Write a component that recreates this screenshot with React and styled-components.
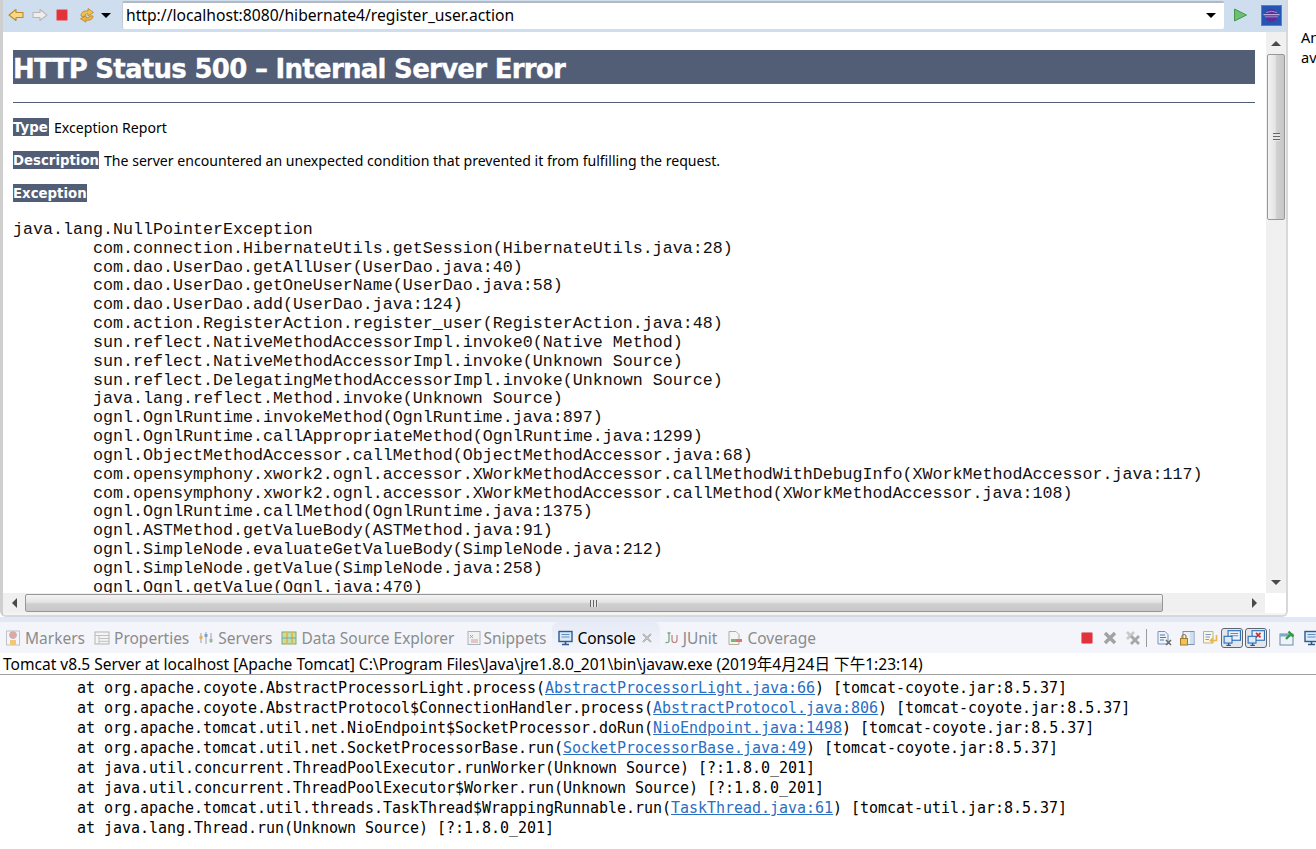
import React from "react";
import styled, { createGlobalStyle } from "styled-components";

const Global = createGlobalStyle`
  html, body { margin: 0; padding: 0; background: #fff; overflow: hidden; }
  #root { width: 1316px; height: 849px; }
`;

const UI = `"Noto Sans", "Noto Sans CJK SC", sans-serif`;

const Shell = styled.div`width:1316px;height:849px;overflow:hidden;display:flex;flex-direction:column;background:#fff;font-family:${UI};`;
const Top = styled.div`height:622px;flex:none;display:flex;background:linear-gradient(#fff 0,#fff 617px,#e3e8f7 617px);`;
const Editor = styled.section`width:1288px;height:617px;flex:none;box-sizing:border-box;border-left:3px solid #cfcfcf;border-right:2px solid #d8d8d8;border-bottom:2px solid #d8d8d8;border-radius:0 0 6px 6px;display:flex;flex-direction:column;overflow:hidden;`;
const Toolbar = styled.div`height:32px;flex:none;box-sizing:border-box;background:#cfdeee;display:flex;align-items:center;padding:0 4px 2px 5px;`;
const ToolIcon = styled.span`width:${p=>p.$w||16}px;height:${p=>p.$w||16}px;flex:none;margin-right:${p=>p.$mr||0}px;display:flex;`;
const Address = styled.div`flex:1;height:28px;box-sizing:border-box;background:#fff;border-top:2px solid #b4b8bf;border-left:1px solid #c8ccd2;border-radius:2px;display:flex;align-items:center;padding:0 8px 2px 3px;font-size:15.67px;color:#000;margin-right:9px;`;
const AddressText = styled.span`flex:1;`;
const Caret = styled.span`width:0;height:0;border-left:5px solid transparent;border-right:5px solid transparent;border-top:5px solid #000;margin-right:${p=>p.$mr||0}px;`;
const EditorMain = styled.div`flex:1;min-height:0;display:flex;`;
const Viewport = styled.div`flex:1;min-width:0;overflow:hidden;padding:18px 11px 0 10px;`;
const Heading = styled.h1`margin:0;height:34px;background:#525d76;color:#fff;font:bold 26px/38px "DejaVu Sans",sans-serif;white-space:nowrap;letter-spacing:-0.72px;-webkit-text-stroke:0.35px #fff;`;
const Rule = styled.hr`margin:18px 0 0;border:0;height:1px;background:#525d76;`;
const InfoLine = styled.p`margin:15px 0 0;height:18px;font:14.1px/19px "Noto Sans",sans-serif;color:#000;white-space:nowrap;`;
const Label = styled.b`display:inline-block;height:18px;background:#525d76;color:#fff;font:bold 13.3px/19px "DejaVu Sans",sans-serif;width:${p=>p.$w}px;margin-right:5px;overflow:hidden;vertical-align:top;`;
const Trace = styled.pre`margin:19px 0 0;font:16.66px/18.83px "Liberation Mono",monospace;color:#111;tab-size:8;`;
const VBar = styled.div`width:20px;flex:none;display:flex;flex-direction:column;background:#f0f0f0;`;
const VBtn = styled.div`height:${p=>p.$h}px;flex:none;display:flex;align-items:center;justify-content:center;`;
const VTrack = styled.div`flex:1;`;
const ArrowUp = styled.span`border-left:5px solid transparent;border-right:5px solid transparent;border-bottom:5px solid #4a4a4a;`;
const ArrowDown = styled.span`border-left:5px solid transparent;border-right:5px solid transparent;border-top:5px solid #4a4a4a;`;
const ArrowLeft = styled.span`border-top:5px solid transparent;border-bottom:5px solid transparent;border-right:5px solid #4a4a4a;`;
const ArrowRight = styled.span`border-top:5px solid transparent;border-bottom:5px solid transparent;border-left:5px solid #4a4a4a;`;
const VThumb = styled.div`height:166px;flex:none;box-sizing:border-box;margin-left:1px;width:18px;border:1px solid #979797;border-radius:2px;background:linear-gradient(90deg,#f3f3f3 0,#e4e4e4 45%,#cfcfcf 55%,#c8c8c8 100%);display:flex;align-items:center;justify-content:center;`;
const GripV = styled.span`width:7px;height:8px;background:repeating-linear-gradient(#666 0,#666 1px,#e6e6e6 1px,#e6e6e6 3px);`;
const GripH = styled.span`width:8px;height:7px;background:repeating-linear-gradient(90deg,#666 0,#666 1px,#e6e6e6 1px,#e6e6e6 3px);`;
const HBar = styled.div`height:20px;flex:none;display:flex;background:#f0f0f0;margin-right:21px;`;
const HBtn = styled.div`width:${p=>p.$w}px;flex:none;display:flex;align-items:center;justify-content:center;`;
const HThumb = styled.div`width:1138px;height:18px;flex:none;box-sizing:border-box;margin-top:1px;border:1px solid #979797;border-radius:2px;background:linear-gradient(#f3f3f3 0,#e4e4e4 45%,#cfcfcf 55%,#c8c8c8 100%);display:flex;align-items:center;justify-content:center;`;
const HTrack = styled.div`flex:1;`;
const BottomEdge = styled.div`height:2px;flex:none;background:#f4f4f4;`;
const Side = styled.aside`flex:1;min-width:0;overflow:hidden;margin-left:5px;padding:27px 0 0 8px;font:14.6px/20px "Noto Sans",sans-serif;color:#000;white-space:pre;`;
const TabBar = styled.div`height:31px;flex:none;background:#f3f5fb;display:flex;align-items:center;padding-left:5px;`;
const Tab = styled.div`display:flex;align-items:center;height:31px;font-size:15.5px;color:${p=>p.$active?"#000":"#8c8c8c"};margin-right:${p=>p.$mr||0}px;${p=>p.$active?"background:linear-gradient(#e6ebf6,#f3f5fb);border-radius:7px 7px 0 0;padding:0 8px 0 6px;":""}`;
const TabIcon = styled.span`width:16px;height:16px;display:flex;margin-right:${p=>p.$mr??4}px;flex:none;`;
const TabClose = styled.span`margin-left:6px;width:10px;height:10px;display:flex;`;
const Spacer = styled.div`flex:1;`;
const ActionIcon = styled.span`width:${p=>p.$pressed?22:16}px;height:${p=>p.$pressed?20:16}px;flex:none;display:flex;align-items:center;justify-content:center;margin-right:${p=>p.$mr??6}px;box-sizing:border-box;${p=>p.$pressed?"border:1.5px solid #5f6670;border-radius:3px;background:#e3e6ea;":""}`;
const Sep = styled.span`width:1px;height:18px;background:#9a9a9a;flex:none;margin:0 9px 0 2px;`;
const ConsoleHead = styled.div`height:21px;flex:none;border-bottom:1px solid #a0a0a0;font-size:15.55px;line-height:22px;padding-left:3px;color:#000;white-space:nowrap;`;
const ConsoleBody = styled.pre`margin:0;padding:3px 0 0 5px;font:15px/20px "DejaVu Sans Mono",monospace;letter-spacing:-0.03px;color:#000;tab-size:8;`;
const Link = styled.a`color:#2a6fc4;text-decoration:underline;`;

const S = ({ children, vb = "0 0 16 16" }) => <svg width="100%" height="100%" viewBox={vb} xmlns="http://www.w3.org/2000/svg">{children}</svg>;

const Arrow = ({ fill, stroke, flip }) => (
  <S><path d="M1 8 L8 2.5 V5.5 H15 V10.5 H8 V13.5 Z" fill={fill} stroke={stroke} strokeWidth="1.1" strokeLinejoin="round" transform={flip ? "matrix(-1 0 0 1 16 0)" : undefined} /></S>
);
const Stop = () => <S><rect x="0.5" y="2.5" width="11" height="11" rx="1.2" fill="#e2333c" stroke="#e58a90" strokeWidth="1" /></S>;
const Refresh = () => (
  <S>
    <path d="M2 9 C2 5 5 3.5 9 4 V1.5 L14.5 5.5 L9 9 V6.8 C7 6.5 5.5 7.5 5 10 Z" fill="#f2c04d" stroke="#b5852a" strokeWidth=".8" />
    <path d="M14 9 C14 12 11 14 7 13 V15.2 L1.5 11.8 L7 8.5 V10.5 C9 11 10.5 10.3 11 8.8 Z" fill="#efb33d" stroke="#b5852a" strokeWidth=".8" />
  </S>
);
const Go = () => <S><path d="M1.5 2 L13.5 8 L1.5 14 Z" fill="#6fbe73" stroke="#3f9a4c" strokeWidth="1" /></S>;
const EclipseLogo = () => (
  <S vb="0 0 21 21">
    <rect width="21" height="21" fill="#2556b4" />
    <rect x=".5" y=".5" width="20" height="20" fill="none" stroke="#3f8ed0" />
    <circle cx="10.5" cy="10.5" r="6.5" fill="#5b2f97" />
    <path d="M5 7.5 Q10.5 5 16 7.5" fill="none" stroke="#a88fd8" />
    <rect x="2.5" y="9.2" width="16" height="1" fill="#cfc8ec" />
    <rect x="4" y="11.4" width="13" height=".9" fill="#a89bd8" />
  </S>
);
const Markers = () => <S><circle cx="8" cy="5" r="3.5" fill="#e6a4a4" stroke="#bbb" /><rect x="1.5" y="1" width="13" height="14" fill="none" stroke="#c2c2c2" /><rect x="5" y="10" width="6" height="5" fill="#f0c877" /></S>;
const Properties = () => <S><rect x="1" y="2" width="14" height="12" fill="#f4f4f4" stroke="#b4b4b4" /><path d="M1 5.5 H15 M5 5.5 V14 M5 8.5 H15 M5 11.3 H15" stroke="#c0c0c0" /></S>;
const Servers = () => <S><path d="M3 3 V13 M8 2 V14 M13 3 V13" stroke="#9aa0aa" strokeWidth="1" /><rect x="1.5" y="6" width="3" height="3" fill="#e0b060" /><rect x="6.5" y="4" width="3" height="3" fill="#7aa0d0" /><rect x="11.5" y="9" width="3" height="3" fill="#8fbf8f" /></S>;
const DataSource = () => <S><rect x="1" y="2" width="14" height="12" fill="#bfe0a8" stroke="#82a870" /><path d="M6 2 V14 M11 2 V14" stroke="#e2b850" strokeWidth="2" /><path d="M1 8 H15" stroke="#6aa6c8" /></S>;
const Snippets = () => <S><rect x="2" y="1.5" width="12" height="13" fill="#f1f1f1" stroke="#a9b4bf" /><path d="M4 5 L7 8 M4 8 L7 5" stroke="#9aa6b3" /><path d="M5 10 H12 M5 12 H12" stroke="#d49a9a" /></S>;
const ConsoleIcon = () => <S><rect x="1" y="1.5" width="13" height="10" fill="#dce9f6" stroke="#2c5a92" strokeWidth="1.4" /><path d="M3.5 4.5 H11.5 M3.5 7 H11.5" stroke="#5b8ec8" /><path d="M4 14.5 H11 M7.5 11.5 V14.5" stroke="#2c5a92" strokeWidth="1.6" /></S>;
const CloseX = () => <S vb="0 0 10 10"><path d="M1 1 L9 9 M9 1 L1 9" stroke="#8a8a8a" strokeWidth="1.6" /><path d="M1 1 L9 9 M9 1 L1 9" stroke="#fff" strokeWidth=".5" /></S>;
const JUnit = () => <S><path d="M2.5 3 H5.5 M4 3 V10.5 Q4 13 .5 12.5" fill="none" stroke="#76a882" strokeWidth="1.3" /><path d="M7 5 V10 Q7 12.5 9.5 12.5 Q12 12.5 12 10 V5" fill="none" stroke="#c47f7f" strokeWidth="1.2" /></S>;
const Coverage = () => <S><path d="M2 1.5 H9 L12 4.5 V14.5 H2 Z" fill="#f4f4f4" stroke="#b3ac98" /><rect x="4" y="9" width="5" height="3" fill="#79b777" /><rect x="9" y="9" width="6" height="3" fill="#d87979" /></S>;
const GreyX = () => <S><path d="M3 3 L13 13 M13 3 L3 13" stroke="#a2a2a2" strokeWidth="3.4" /></S>;
const GreyXX = () => <S><path d="M2 2 L9 9 M9 2 L2 9" stroke="#c9c9c9" strokeWidth="2.6" /><path d="M6 6 L14 14 M14 6 L6 14" stroke="#a6a6a6" strokeWidth="2.8" /></S>;
const DocX = () => <S><path d="M2 1.5 H9 L12 4.5 V14 H2 Z" fill="#eef2fa" stroke="#7d93b5" /><path d="M4 5 H9 M4 7.5 H10 M4 10 H8" stroke="#4d79b8" /><path d="M10 10 L15 15 M15 10 L10 15" stroke="#6b6b6b" strokeWidth="1.6" /></S>;
const Lock = () => <S><rect x="4" y="1.5" width="11" height="13" fill="#eef2f8" stroke="#7e8fa6" /><rect x="11" y="2" width="3.5" height="12" fill="#cfe0f0" /><rect x="1.5" y="8.5" width="7" height="6.5" fill="#f0c35a" stroke="#a77b22" /><path d="M3 8.5 V6.5 A2 2 0 0 1 7 6.5 V8.5" fill="none" stroke="#8d7a55" strokeWidth="1.2" /></S>;
const DocArrow = () => <S><path d="M1.5 1.5 H11 V13 H1.5 Z" fill="#faf6e6" stroke="#c9b27a" /><path d="M3.5 4.5 H9 M3.5 7 H8 M3.5 9.5 H7" stroke="#7f9cc4" /><path d="M14.5 5 V10.5 H9 M11 8 L8.5 10.5 L11 13" fill="none" stroke="#e5b64f" strokeWidth="1.6" /></S>;
const PinWin = () => <S><rect x="1" y="4" width="13" height="11" fill="#eef3f8" stroke="#6d8aa8" /><rect x="1" y="4" width="13" height="2.5" fill="#7fa7c9" /><path d="M7 9 L11 5 M9.5 1.5 L14.5 6.5" stroke="#2f9a3d" strokeWidth="2.4" /></S>;

const Pressed = ({ red }) => (
  <S>
    <rect x="4.5" y="1.5" width="11" height="8.5" fill="#eef3fa" stroke="#2c70b8" />
    {red ? <path d="M8 3.5 L12 7.5 M12 3.5 L8 7.5" stroke="#d23030" strokeWidth="1.5" /> : <path d="M6.5 4 H13.5 M6.5 6 H13.5" stroke="#5b8ec8" />}
    <rect x="1" y="6.5" width="7" height="6" fill="#dfeaf6" stroke="#2c70b8" />
    <path d="M3 14.5 H7 M5 12.5 V14.5" stroke="#2c5a92" strokeWidth="1.2" />
  </S>
);

const trace = `java.lang.NullPointerException
\tcom.connection.HibernateUtils.getSession(HibernateUtils.java:28)
\tcom.dao.UserDao.getAllUser(UserDao.java:40)
\tcom.dao.UserDao.getOneUserName(UserDao.java:58)
\tcom.dao.UserDao.add(UserDao.java:124)
\tcom.action.RegisterAction.register_user(RegisterAction.java:48)
\tsun.reflect.NativeMethodAccessorImpl.invoke0(Native Method)
\tsun.reflect.NativeMethodAccessorImpl.invoke(Unknown Source)
\tsun.reflect.DelegatingMethodAccessorImpl.invoke(Unknown Source)
\tjava.lang.reflect.Method.invoke(Unknown Source)
\tognl.OgnlRuntime.invokeMethod(OgnlRuntime.java:897)
\tognl.OgnlRuntime.callAppropriateMethod(OgnlRuntime.java:1299)
\tognl.ObjectMethodAccessor.callMethod(ObjectMethodAccessor.java:68)
\tcom.opensymphony.xwork2.ognl.accessor.XWorkMethodAccessor.callMethodWithDebugInfo(XWorkMethodAccessor.java:117)
\tcom.opensymphony.xwork2.ognl.accessor.XWorkMethodAccessor.callMethod(XWorkMethodAccessor.java:108)
\tognl.OgnlRuntime.callMethod(OgnlRuntime.java:1375)
\tognl.ASTMethod.getValueBody(ASTMethod.java:91)
\tognl.SimpleNode.evaluateGetValueBody(SimpleNode.java:212)
\tognl.SimpleNode.getValue(SimpleNode.java:258)
\tognl.Ognl.getValue(Ognl.java:470)`;

const consoleLines = [
  ["\tat org.apache.coyote.AbstractProcessorLight.process(", "AbstractProcessorLight.java:66", ") [tomcat-coyote.jar:8.5.37]"],
  ["\tat org.apache.coyote.AbstractProtocol$ConnectionHandler.process(", "AbstractProtocol.java:806", ") [tomcat-coyote.jar:8.5.37]"],
  ["\tat org.apache.tomcat.util.net.NioEndpoint$SocketProcessor.doRun(", "NioEndpoint.java:1498", ") [tomcat-coyote.jar:8.5.37]"],
  ["\tat org.apache.tomcat.util.net.SocketProcessorBase.run(", "SocketProcessorBase.java:49", ") [tomcat-coyote.jar:8.5.37]"],
  ["\tat java.util.concurrent.ThreadPoolExecutor.runWorker(Unknown Source) [?:1.8.0_201]"],
  ["\tat java.util.concurrent.ThreadPoolExecutor$Worker.run(Unknown Source) [?:1.8.0_201]"],
  ["\tat org.apache.tomcat.util.threads.TaskThread$WrappingRunnable.run(", "TaskThread.java:61", ") [tomcat-util.jar:8.5.37]"],
  ["\tat java.lang.Thread.run(Unknown Source) [?:1.8.0_201]"],
];

const tabs = [
  ["Markers", <Markers />, 9, 4],
  ["Properties", <Properties />, 9, 4],
  ["Servers", <Servers />, 9, 4],
  ["Data Source Explorer", <DataSource />, 11, 4],
  ["Snippets", <Snippets />, 6, 2],
];

export default function App() {
  return (
    <Shell>
      <Global />
      <Top>
        <Editor>
          <Toolbar>
            <ToolIcon $mr={8}><Arrow fill="#f7d98a" stroke="#c08a22" /></ToolIcon>
            <ToolIcon $mr={8}><Arrow fill="#eeeeee" stroke="#b8b8b8" flip /></ToolIcon>
            <ToolIcon $mr={7}><Stop /></ToolIcon>
            <ToolIcon $mr={6}><Refresh /></ToolIcon>
            <Caret $mr={11} />
            <Address>
              <AddressText>http://localhost:8080/hibernate4/register_user.action</AddressText>
              <Caret />
            </Address>
            <ToolIcon $mr={12}><Go /></ToolIcon>
            <ToolIcon $w={21}><EclipseLogo /></ToolIcon>
          </Toolbar>
          <EditorMain>
            <Viewport>
              <Heading>HTTP Status 500 – Internal Server Error</Heading>
              <Rule />
              <InfoLine><Label $w={36}>Type</Label>Exception Report</InfoLine>
              <InfoLine><Label $w={86}>Description</Label>The server encountered an unexpected condition that prevented it from fulfilling the request.</InfoLine>
              <InfoLine><Label $w={74}>Exception</Label></InfoLine>
              <Trace>{trace}</Trace>
            </Viewport>
            <VBar>
              <VBtn $h={22}><ArrowUp /></VBtn>
              <VThumb><GripV /></VThumb>
              <VTrack />
              <VBtn $h={22}><ArrowDown /></VBtn>
            </VBar>
          </EditorMain>
          <HBar>
            <HBtn $w={22}><ArrowLeft /></HBtn>
            <HThumb><GripH /></HThumb>
            <HTrack />
            <HBtn $w={22}><ArrowRight /></HBtn>
          </HBar>
          <BottomEdge />
        </Editor>
        <Side>{"An outline is not\navailable."}</Side>
      </Top>
      <TabBar>
        {tabs.map(([name, icon, mr, iconMr]) => (
          <Tab key={name} $mr={mr}><TabIcon $mr={iconMr}>{icon}</TabIcon>{name}</Tab>
        ))}
        <Tab $active $mr={5}><TabIcon $mr={3}><ConsoleIcon /></TabIcon>Console<TabClose><CloseX /></TabClose></Tab>
        <Tab $mr={10}><TabIcon $mr={2}><JUnit /></TabIcon>JUnit</Tab>
        <Tab><TabIcon><Coverage /></TabIcon>Coverage</Tab>
        <Spacer />
        <ActionIcon $mr={5}><Stop /></ActionIcon>
        <ActionIcon $mr={7}><GreyX /></ActionIcon>
        <ActionIcon $mr={3}><GreyXX /></ActionIcon>
        <Sep />
        <ActionIcon $mr={7}><DocX /></ActionIcon>
        <ActionIcon $mr={7}><Lock /></ActionIcon>
        <ActionIcon $mr={3}><DocArrow /></ActionIcon>
        <ActionIcon $pressed $mr={2}><Pressed /></ActionIcon>
        <ActionIcon $pressed $mr={0}><Pressed red /></ActionIcon>
        <Sep />
        <ActionIcon $mr={9}><PinWin /></ActionIcon>
        <ActionIcon $mr={-4}><ConsoleIcon /></ActionIcon>
      </TabBar>
      <ConsoleHead>Tomcat v8.5 Server at localhost [Apache Tomcat] C:\Program Files\Java\jre1.8.0_201\bin\javaw.exe (2019年4月24日 下午1:23:14)</ConsoleHead>
      <ConsoleBody>
        {consoleLines.map(([a, link, c], i) => (
          <div key={i}>{a}{link && <Link>{link}</Link>}{c}</div>
        ))}
      </ConsoleBody>
    </Shell>
  );
}
